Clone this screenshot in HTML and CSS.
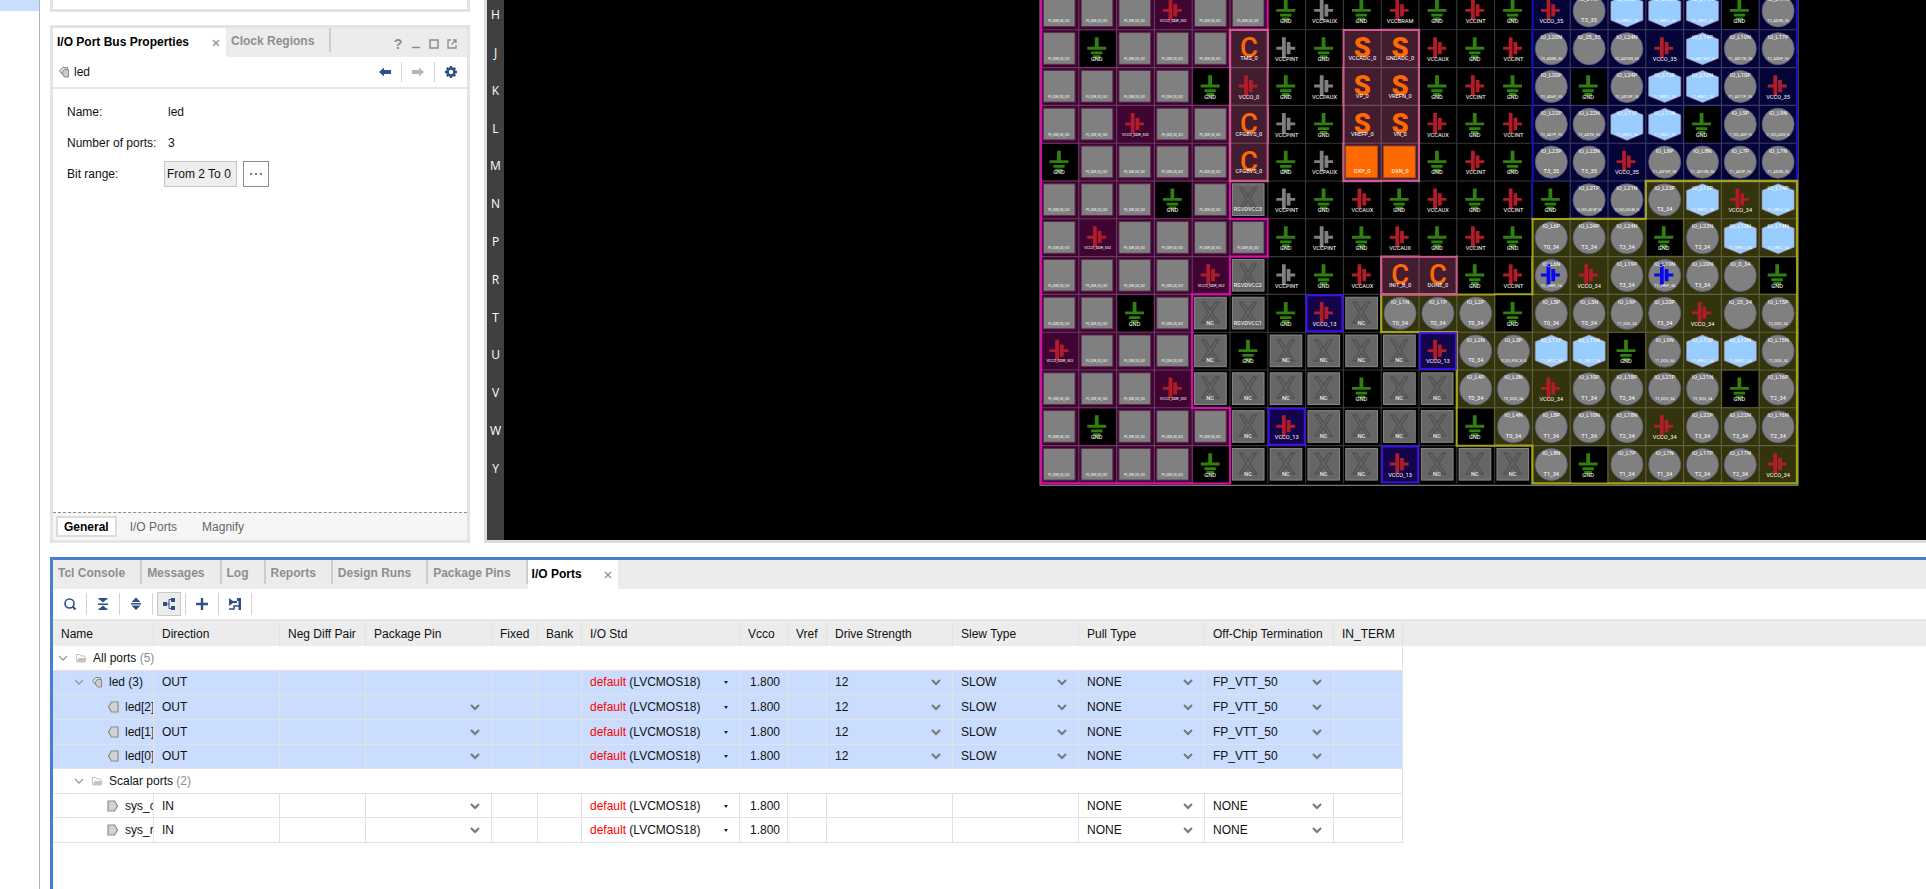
FILE: index.html
```html
<!DOCTYPE html>
<html lang="en">
<head>
  <meta charset="UTF-8">
  <meta name="viewport" content="width=device-width, initial-scale=1.0">
  <title>I/O Planning</title>
  <link rel="stylesheet" href="styles.css">
</head>
<body>
  <!-- shared icons -->
  <svg class="defs" width="0" height="0">
    <symbol id="bus" viewBox="0 0 12 12">
      <path d="M4.500 1.500h5v7h-5l-3-3.500z" fill="#ddd" stroke="#8a8a8a"/>
      <path d="M6.500 3.500h4v7.500h-4l-2-3v-2z" fill="#ccc" stroke="#8a8a8a"/>
    </symbol>
    <symbol id="outport" viewBox="0 0 12 12">
      <path d="M4.500 1h6.500v10h-6.500l-3-5z" fill="#d3d3d3" stroke="#8a8a8a" stroke-width="1.200"/>
    </symbol>
    <symbol id="inport" viewBox="0 0 12 12">
      <path d="M1 1h6.500l3 5-3 5h-6.500z" fill="#d3d3d3" stroke="#8a8a8a" stroke-width="1.200"/>
    </symbol>
    <symbol id="folder" viewBox="0 0 12 12">
      <path d="M1.500 9.500v-7h3.500l1 1.500h4v2" fill="none" stroke="#c4c4c4"/>
      <path d="M3.500 6h8l-1 4.500h-9z" fill="#c4c4c4"/>
    </symbol>
    <symbol id="twist" viewBox="0 0 12 12">
      <path d="M2 4l4 4 4-4" fill="none" stroke="#999" stroke-width="1.300"/>
    </symbol>
    <symbol id="close" viewBox="0 0 12 12">
      <path d="M3 3l6 6M9 3l-6 6" fill="none" stroke="#8c8c8c" stroke-width="1.200"/>
    </symbol>
  </svg>

  <aside class="sidebar"><div class="sidebar-item"></div></aside>

  <main class="main">
    <div class="upper">
      <div class="left">
        <div class="stub"></div>

        <section class="panel props">
          <div class="tabs">
            <div class="tab active props-tab">I/O Port Bus Properties
              <button class="close" aria-label="Close"><svg width="12" height="12"><use href="#close"/></svg></button>
            </div>
            <button class="tab">Clock Regions</button>
            <div class="winbtns">
              <button class="help">?</button>
              <button aria-label="Minimize"><svg width="12" height="12" viewBox="0 0 12 12"><path d="M2 9.500h8" stroke="#8c8c8c" stroke-width="1.500"/></svg></button>
              <button aria-label="Maximize"><svg width="12" height="12" viewBox="0 0 12 12"><path d="M2 2h8v8h-8z" fill="none" stroke="#8c8c8c" stroke-width="1.500"/></svg></button>
              <button aria-label="Float"><svg width="12" height="12" viewBox="0 0 12 12"><path d="M5 2h-3v8h8v-3M5.500 6.500l4-4M7 2h3v3" fill="none" stroke="#8c8c8c" stroke-width="1.300"/></svg></button>
            </div>
          </div>
          <div class="props-bar">
            <svg width="12" height="12"><use href="#bus"/></svg>
            <span class="props-name">led</span>
            <button aria-label="Back"><svg width="14" height="14" viewBox="0 0 14 14"><path d="M1 7l5-4.500v2.500h7v4h-7v2.500z" fill="#2f4f8c"/></svg></button>
            <i class="sep"></i>
            <button aria-label="Forward"><svg width="14" height="14" viewBox="0 0 14 14"><path d="M13 7l-5-4.500v2.500h-7v4h7v2.500z" fill="#b8b8b8"/></svg></button>
            <i class="sep"></i>
            <button aria-label="Settings"><svg width="14" height="14" viewBox="0 0 14 14"><circle cx="7" cy="7" r="3.500" fill="none" stroke="#2f4f8c" stroke-width="2.600"/><path d="M7 1v2M7 11v2M1 7h2M11 7h2M2.800 2.800l1.400 1.400M9.800 9.800l1.400 1.400M2.800 11.200l1.400-1.400M9.800 4.200l1.400-1.400" stroke="#2f4f8c" stroke-width="2.400"/></svg></button>
          </div>
          <div class="form">
            <span>Name:</span><span>led</span>
            <span>Number of ports:</span><span>3</span>
            <label for="range">Bit range:</label>
            <div class="range">
              <input id="range" type="text" value="From 2 To 0" readonly>
              <button aria-label="Edit range"><svg width="14" height="4" viewBox="0 0 14 4"><path d="M1 1h2v2h-2zM6 1h2v2h-2zM11 1h2v2h-2z" fill="#777"/></svg></button>
            </div>
          </div>
          <div class="subtabs">
            <button class="subtab on">General</button>
            <button class="subtab">I/O Ports</button>
            <button class="subtab">Magnify</button>
          </div>
        </section>
      </div>

      <section class="device">
        <div class="rows" id="rows"></div>
        <div class="package">
          <svg class="chip" id="chip" viewBox="0 0 800 520"></svg>
        </div>
      </section>
    </div>

    <section class="ports-panel">
      <div class="tabs">
        <button class="tab">Tcl Console</button>
        <button class="tab">Messages</button>
        <button class="tab">Log</button>
        <button class="tab">Reports</button>
        <button class="tab">Design Runs</button>
        <button class="tab">Package Pins</button>
        <div class="tab active">I/O Ports
          <button class="close" aria-label="Close"><svg width="12" height="12"><use href="#close"/></svg></button>
        </div>
      </div>
      <div class="toolbar">
        <button aria-label="Search"><svg width="14" height="14" viewBox="0 0 14 14"><circle cx="6.500" cy="6.500" r="4.500" fill="none" stroke="#2f4f8c" stroke-width="1.600"/><path d="M9.500 9.500l3 3" stroke="#2f4f8c" stroke-width="2"/></svg></button>
        <button aria-label="Collapse all"><svg width="14" height="14" viewBox="0 0 14 14"><path d="M2.500 1h9v1.500h-1l-3.500 3-3.500-3h-1zM2 6.500h10v1.500h-10zM2.500 13h9v-1.500h-1l-3.500-3-3.500 3h-1z" fill="#2f4f8c"/></svg></button>
        <button aria-label="Expand all"><svg width="14" height="14" viewBox="0 0 14 14"><path d="M7 0.500l4.500 4.500h-9zM2 6h10v1.500h-10zM2.500 8.500h9l-4.500 4.500z" fill="#2f4f8c"/></svg></button>
        <button class="on" aria-label="Group by interface"><svg width="14" height="14" viewBox="0 0 14 14"><path d="M1 5h4v4h-4zM9 1h4v4h-4zM9 9h4v4h-4z" fill="#2f4f8c"/><path d="M10 2.500h-3v9h3M5 7h2" fill="none" stroke="#2f4f8c"/></svg></button>
        <button aria-label="Add"><svg width="14" height="14" viewBox="0 0 14 14"><path d="M7 1v12M1 7h12" stroke="#2f4f8c" stroke-width="2.400"/></svg></button>
        <button aria-label="Place ports"><svg width="14" height="14" viewBox="0 0 14 14"><path d="M1 1l4 3h4v2h-4l-4 3zM9 1h4v12h-2.500v-9h-1.500z" fill="#2f4f8c"/><path d="M1 12h5v-3h5" fill="none" stroke="#2f4f8c" stroke-width="1.500"/></svg></button>
      </div>

      <table class="ports">
        <colgroup>
          <col class="w101"><col class="w126"><col class="w86"><col class="w126"><col class="w46"><col class="w44"><col class="w158">
          <col class="w48"><col class="w39"><col class="w126"><col class="w126"><col class="w126"><col class="w129"><col class="w69"><col>
        </colgroup>
        <thead>
          <tr>
            <th>Name</th><th>Direction</th><th>Neg Diff Pair</th><th>Package Pin</th><th>Fixed</th><th>Bank</th><th>I/O Std</th>
            <th>Vcco</th><th>Vref</th><th>Drive Strength</th><th>Slew Type</th><th>Pull Type</th><th>Off-Chip Termination</th><th>IN_TERM</th><th class="rest"></th>
          </tr>
        </thead>
        <tbody>
          <tr>
            <td colspan="14"><div class="node"><svg width="12" height="12"><use href="#twist"/></svg><svg width="12" height="12"><use href="#folder"/></svg><span>All ports <em>(5)</em></span></div></td>
            <td class="rest"></td>
          </tr>
          <tr class="sel">
            <td><div class="node l1"><svg width="12" height="12"><use href="#twist"/></svg><svg width="12" height="12"><use href="#bus"/></svg><span>led (3)</span></div></td>
            <td>OUT</td><td></td><td></td><td></td><td></td>
            <td><button class="std"><b>default</b> (LVCMOS18)</button></td>
            <td class="num">1.800</td><td></td>
            <td><select aria-label="Drive Strength"><option>12</option></select></td>
            <td><select aria-label="Slew Type"><option>SLOW</option></select></td>
            <td><select aria-label="Pull Type"><option>NONE</option></select></td>
            <td><select aria-label="Off-Chip Termination"><option>FP_VTT_50</option></select></td>
            <td></td><td class="rest"></td>
          </tr>
          <tr class="sel">
            <td><div class="node l2"><svg width="12" height="12"><use href="#outport"/></svg><span>led[2]</span></div></td>
            <td>OUT</td><td></td><td><select aria-label="Package Pin"><option></option></select></td><td></td><td></td>
            <td><button class="std"><b>default</b> (LVCMOS18)</button></td>
            <td class="num">1.800</td><td></td>
            <td><select aria-label="Drive Strength"><option>12</option></select></td>
            <td><select aria-label="Slew Type"><option>SLOW</option></select></td>
            <td><select aria-label="Pull Type"><option>NONE</option></select></td>
            <td><select aria-label="Off-Chip Termination"><option>FP_VTT_50</option></select></td>
            <td></td><td class="rest"></td>
          </tr>
          <tr class="sel">
            <td><div class="node l2"><svg width="12" height="12"><use href="#outport"/></svg><span>led[1]</span></div></td>
            <td>OUT</td><td></td><td><select aria-label="Package Pin"><option></option></select></td><td></td><td></td>
            <td><button class="std"><b>default</b> (LVCMOS18)</button></td>
            <td class="num">1.800</td><td></td>
            <td><select aria-label="Drive Strength"><option>12</option></select></td>
            <td><select aria-label="Slew Type"><option>SLOW</option></select></td>
            <td><select aria-label="Pull Type"><option>NONE</option></select></td>
            <td><select aria-label="Off-Chip Termination"><option>FP_VTT_50</option></select></td>
            <td></td><td class="rest"></td>
          </tr>
          <tr class="sel">
            <td><div class="node l2"><svg width="12" height="12"><use href="#outport"/></svg><span>led[0]</span></div></td>
            <td>OUT</td><td></td><td><select aria-label="Package Pin"><option></option></select></td><td></td><td></td>
            <td><button class="std"><b>default</b> (LVCMOS18)</button></td>
            <td class="num">1.800</td><td></td>
            <td><select aria-label="Drive Strength"><option>12</option></select></td>
            <td><select aria-label="Slew Type"><option>SLOW</option></select></td>
            <td><select aria-label="Pull Type"><option>NONE</option></select></td>
            <td><select aria-label="Off-Chip Termination"><option>FP_VTT_50</option></select></td>
            <td></td><td class="rest"></td>
          </tr>
          <tr>
            <td colspan="14"><div class="node l1"><svg width="12" height="12"><use href="#twist"/></svg><svg width="12" height="12"><use href="#folder"/></svg><span>Scalar ports <em>(2)</em></span></div></td>
            <td class="rest"></td>
          </tr>
          <tr>
            <td><div class="node l2"><svg width="12" height="12"><use href="#inport"/></svg><span>sys_clk</span></div></td>
            <td>IN</td><td></td><td><select aria-label="Package Pin"><option></option></select></td><td></td><td></td>
            <td><button class="std"><b>default</b> (LVCMOS18)</button></td>
            <td class="num">1.800</td><td></td><td></td><td></td>
            <td><select aria-label="Pull Type"><option>NONE</option></select></td>
            <td><select aria-label="Off-Chip Termination"><option>NONE</option></select></td>
            <td></td><td class="rest"></td>
          </tr>
          <tr>
            <td><div class="node l2"><svg width="12" height="12"><use href="#inport"/></svg><span>sys_rst</span></div></td>
            <td>IN</td><td></td><td><select aria-label="Package Pin"><option></option></select></td><td></td><td></td>
            <td><button class="std"><b>default</b> (LVCMOS18)</button></td>
            <td class="num">1.800</td><td></td><td></td><td></td>
            <td><select aria-label="Pull Type"><option>NONE</option></select></td>
            <td><select aria-label="Off-Chip Termination"><option>NONE</option></select></td>
            <td></td><td class="rest"></td>
          </tr>
        </tbody>
      </table>
    </section>
  </main>
  <script src="script.js"></script>
</body>
</html>
```

FILE: styles.css
```css
*{
  box-sizing:border-box;
}
body{
  margin:0;
  height:100vh;
  display:flex;
  overflow:hidden;
  background-color:#fff;
  color:#111;
  font-family:"Liberation Sans", Arial, sans-serif;
  font-size:12px;
}
button, input, select{
  font:inherit;
  color:inherit;
}
button{
  border:0;
  padding:0;
  background:none;
}
svg{
  display:block;
  flex:none;
}
.defs{
  position:absolute;
}

/* left strip */
.sidebar{
  flex:none;
  width:40px;
  border-right:1px solid #b4b4b4;
}
.sidebar-item{
  height:11px;
  background-color:#cbddfe;
}

.main{
  flex:1;
  min-width:0;
  display:flex;
  flex-direction:column;
  gap:14px;
  padding-left:10px;
}
.upper{
  flex:1;
  min-height:0;
  display:flex;
  gap:14px;
}
.left{
  flex:none;
  width:420px;
  display:flex;
  flex-direction:column;
  gap:13px;
}
.stub{
  height:12px;
  border:3px solid #e4e4e4;
  border-top:0;
}
.panel{
  border:3px solid #e4e4e4;
}

/* tabs */
.tabs{
  display:flex;
  height:29px;
  background-color:#ececec;
}
.tab{
  height:24px;
  padding:2px 15px 0 5px;
  border-right:2px solid #ccc;
  display:flex;
  align-items:center;
  color:#8e8e8e;
  font-weight:bold;
  white-space:nowrap;
}
.tab.active{
  height:29px;
  padding:0 4px 2px 4px;
  border-right:0;
  gap:20px;
  background-color:#fff;
  color:#000;
}
.close{
  padding-top:3px;
}
.props-tab{
  width:173px;
  justify-content:space-between;
}
.winbtns{
  margin-left:auto;
  padding:2px 9px 0 0;
  display:flex;
  align-items:center;
  gap:6px;
}
.help{
  width:12px;
  color:#8c8c8c;
  font-size:14px;
  font-weight:bold;
}

/* properties */
.props{
  flex:1;
  display:flex;
  flex-direction:column;
}
.props-bar{
  height:32px;
  padding:0 9px 0 5px;
  border-bottom:2px solid #e6e6e6;
  display:flex;
  align-items:center;
  gap:9px;
}
.props-name{
  flex:1;
  margin-left:-5px;
}
.sep{
  width:1px;
  height:20px;
  background-color:#d8d8d8;
}
.form{
  flex:1;
  padding:7px 14px;
  display:grid;
  grid-template-columns:101px 1fr;
  grid-auto-rows:31px;
  align-content:start;
  align-items:center;
}
.range{
  display:flex;
  gap:6px;
  margin-left:-4px;
}
.range input{
  width:73px;
  height:26px;
  padding:0 2px;
  border:1px solid #c4c4c4;
  background-color:#eee;
}
.range button{
  width:26px;
  height:26px;
  border:1px solid #8c8c8c;
  display:flex;
  align-items:center;
  justify-content:center;
}
.subtabs{
  display:flex;
  gap:1px;
  padding:3px;
  border-top:1px dashed #8c8c8c;
  background-color:#f6f6f6;
}
.subtab{
  height:21px;
  padding:0 12px;
  color:#666;
}
.subtab.on{
  padding:0 6px;
  border:2px solid #dcdcdc;
  background-color:#fff;
  color:#000;
  font-weight:bold;
}

/* package view */
.device{
  flex:1;
  min-width:0;
  display:flex;
  overflow:hidden;
  border-left:3px solid #ddd;
  border-bottom:3px solid #ddd;
  background-color:#000;
}
.rows{
  flex:none;
  width:17px;
  padding-bottom:53px;
  display:flex;
  flex-direction:column;
  justify-content:flex-end;
  background-color:#404040;
  color:#fff;
  font-family:"Open Sans", sans-serif;
  font-size:12px;
  text-align:center;
}
.rows span{
  flex:0 0 calc(491px / 13);
  display:flex;
  align-items:center;
  justify-content:center;
}
.package{
  flex:1;
  min-width:0;
  display:flex;
  align-items:flex-end;
  justify-content:flex-end;
  padding:0 129px 57px 0;
}
.chip{
  width:756px;
  overflow:visible;
  font-family:Roboto, sans-serif;
  text-anchor:middle;
}
.t6{ font-size:6px; }
.t4{ font-size:4px; }
.t3{ font-size:3px; }
.lbl{
  fill:#fff;
}
.big{
  font-size:29px;
  font-weight:500;
  fill:#ff6a00;
}
.big.s{
  font-weight:900;
}
.nc{
  font-size:32px;
  fill:none;
  stroke:#4c4c4c;
}

/* i/o ports */
.ports-panel{
  flex:none;
  padding-bottom:46px;
  border-top:3px solid #4a7fd0;
  border-left:3px solid #4a7fd0;
}
.toolbar{
  height:32px;
  border-bottom:2px solid #e6e6e6;
  padding:0 0 1px 1px;
  display:flex;
  align-items:center;
}
.toolbar button{
  width:33px;
  height:22px;
  border-right:1px solid #d4d4d4;
  display:flex;
  align-items:center;
  justify-content:center;
}
.toolbar .on svg{
  box-sizing:content-box;
  padding:4px;
  border:1px solid #c8c8c8;
  background-color:#ececec;
}
.ports{
  width:100%;
  height:222px;
  table-layout:fixed;
  border-collapse:separate;
  border-spacing:0;
}
.w39{ width:39px; }
.w44{ width:44px; }
.w46{ width:46px; }
.w48{ width:48px; }
.w69{ width:69px; }
.w86{ width:86px; }
.w101{ width:101px; }
.w126{ width:126px; }
.w129{ width:129px; }
.w158{ width:158px; }
.ports th, .ports td{
  padding:0 0 0 8px;
  border-right:1px solid #e2e2e2;
  border-bottom:1px solid #e2e2e2;
  overflow:hidden;
  text-align:left;
  white-space:nowrap;
}
.ports th{
  height:25px;
  border-bottom:0;
  background-color:#ececec;
  font-weight:normal;
}
.ports td:first-child{
  padding-left:4px;
}
.ports .rest{
  border:0;
}
.ports .num{
  padding-left:10px;
}
.sel td:not(.rest){
  background-color:#cbddfe;
}
.node{
  height:20px;
  display:flex;
  align-items:center;
  gap:6px;
}
.node em{
  font-style:normal;
  color:#8c8c8c;
}
.l1{ padding-left:16px; }
.l2{ padding-left:50px; }
.std, .ports select{
  display:block;
  width:100%;
  height:20px;
  padding:0;
  border:0;
  appearance:none;
  text-align:left;
  background:url("data:image/svg+xml,%3Csvg xmlns='http://www.w3.org/2000/svg' width='12' height='12'%3E%3Cpath d='M2 4l4 4 4-4' fill='none' stroke='%23777' stroke-width='2'/%3E%3C/svg%3E") no-repeat right 10px center;
}
.std{
  background-image:url("data:image/svg+xml,%3Csvg xmlns='http://www.w3.org/2000/svg' width='12' height='12'%3E%3Cpath d='M4 5h4l-2 3z' fill='%23222'/%3E%3C/svg%3E");
  background-position:right 7px center;
}
.std b{
  color:#f00;
  font-weight:normal;
}
```

FILE: script.js
```js
// s: ddr pad, M: ddr supply, g: gnd, w: ps supply, V: core supply, C/S/O: config pads,
// X: not connected, b: bank 13 supply, c: pad, h: clock pad, v: bank supply, B: vref pad
const left = {
  H: "s s s M s s g w,VCCPAUX g V,VCCBRAM g V,VCCINT g",
  J: "s g s s s C,TMS_0 w,VCCPINT g S,VCCADC_0 S,GNDADC_0 V,VCCAUX g V,VCCINT",
  K: "s s s s g k,VCCO_0 g w,VCCPAUX S,VP_0 S,VREFN_0 g V,VCCINT g",
  L: "s s M s s C,CFGBVS_0 w,VCCPINT g S,VREFP_0 S,VN_0 V,VCCAUX g V,VCCINT",
  M: "g s s s s C,CFGBVS_0 g w,VCCPAUX O,DXP_0 O,DXN_0 g V,VCCINT g",
  N: "s s s g s X,RSVDVCC3 w,VCCPINT g V,VCCAUX g V,VCCAUX g V,VCCINT",
  P: "s M s s s s g w,VCCPINT g V,VCCAUX g V,VCCINT g",
  R: "s s s s M X,RSVDVCC2 w,VCCPINT g V,VCCAUX C,INIT_B_0 C,DONE_0 g V,VCCINT",
  T: "s s g s X X,RSVDVCC1 g b X c,IO_L1N,T0_34 c,IO_L1P,T0_34 c,IO_L2P,T0_34 g",
  U: "M s s s X g X X X X b c,IO_L2N,T0_34 c,IO_L3P,T0_DQS_PUDC_B_34",
  V: "s s s M X X X X g X X c,IO_L4P,T0_34 c,IO_L3N,T0_DQS_34",
  W: "s g s s s X b X X X X g c,IO_L4N,T0_34",
  Y: "s s s s g X X X X b X X X"
};
const right = {
  H: "v,VCCO_35 c,IO_L19P,T3_35 h,IO_L13P,T2_MRCC_35 h,IO_L13N,T2_MRCC_35 h,IO_L14N,T2_SRCC_35 g c,IO_L17N,T2_AD5N_35",
  J: "c,IO_L20N,T3_AD6N_35 c,IO_25_35 c,IO_L24N,T3_AD15N_35 v,VCCO_35 h,IO_L14P,T2_AD4P_SRCC_35 c,IO_L10N,T1_AD11N_35 c,IO_L17P,T2_AD5P_35",
  K: "c,IO_L20P,T3_AD6P_35 g c,IO_L24P,T3_AD15P_35 h,IO_L12P,T1_MRCC_35 h,IO_L12N,T1_MRCC_35 c,IO_L10P,T1_AD11P_35 v,VCCO_35",
  L: "c,IO_L22P,T3_AD7P_35 c,IO_L22N,T3_AD7N_35 h,IO_L11P,T1_SRCC_35 h,IO_L11N,T1_SRCC_35 g c,IO_L9P,T1_DQS_AD3P_35 c,IO_L9N,T1_DQS_AD3N_35",
  M: "c,IO_L23P,T3_35 c,IO_L23N,T3_35 v,VCCO_35 c,IO_L8P,T1_AD10P_35 c,IO_L8N,T1_AD10N_35 c,IO_L7P,T1_AD2P_35 c,IO_L7N,T1_AD2N_35",
  N: "g c,IO_L21P,T3_DQS_AD14P_35 c,IO_L21N,T3_DQS_AD14N_35 c,IO_L23P,T3_34 h,IO_L13P,T2_MRCC_34 v,VCCO_34 h,IO_L14P,T2_SRCC_34",
  P: "c,IO_L6P,T0_34 c,IO_L24P,T3_34 c,IO_L24N,T3_34 g c,IO_L23N,T3_34 h,IO_L13N,T2_MRCC_34 h,IO_L14N,T2_SRCC_34",
  R: "B,IO_L6N,T0_VREF_34 v,VCCO_34 c,IO_L19P,T3_34 B,IO_L19N,T3_VREF_34 c,IO_L20N,T3_34 c,IO_0_34 g",
  T: "c,IO_L5P,T0_34 c,IO_L5N,T0_34 c,IO_L9P,T1_DQS_34 c,IO_L20P,T3_34 v,VCCO_34 c,IO_25_34 c,IO_L15P,T2_DQS_34",
  U: "h,IO_L11P,T1_SRCC_34 h,IO_L11N,T1_SRCC_34 g c,IO_L9N,T1_DQS_34 h,IO_L12P,T1_MRCC_34 h,IO_L12N,T1_MRCC_34 c,IO_L15N,T2_DQS_34",
  V: "v,VCCO_34 c,IO_L10P,T1_34 c,IO_L18P,T2_34 c,IO_L21P,T3_DQS_34 c,IO_L21N,T3_DQS_34 g c,IO_L16P,T2_34",
  W: "c,IO_L8P,T1_34 c,IO_L10N,T1_34 c,IO_L18N,T2_34 v,VCCO_34 c,IO_L22P,T3_34 c,IO_L22N,T3_34 c,IO_L16N,T2_34",
  Y: "c,IO_L8N,T1_34 g c,IO_L7P,T1_34 c,IO_L7N,T1_34 c,IO_L17P,T2_34 c,IO_L17N,T2_34 v,VCCO_34"
};

// bank outlines, in cells
const banks = [
  {fill: "#400433", stroke: "#d60fa8", at: "0,0 6,0 6,1 5,1 5,6 6,6 6,7 5,7 5,8 4,8 4,11 5,11 5,13 0,13"},
  {fill: "#040438", stroke: "#1414b4", at: "13,0 20,0 20,5 16,5 16,6 13,6"},
  {fill: "#33330c", stroke: "#a3a31c", at: "16,5 20,5 20,13 13,13 13,12 11,12 11,9 9,9 9,8 13,8 13,6 16,6"},
  {fill: "#441c30", stroke: "#cc5c90", at: "5,1 6,1 6,5 5,5"},
  {fill: "#441c30", stroke: "#cc5c90", at: "8,1 10,1 10,5 8,5"},
  {fill: "#441c30", stroke: "#cc5c90", at: "9,7 11,7 11,8 9,8"}
];

const label = (text, y, x = 20) => {
  const size = text.length > 12 ? 3 : text.length > 8 ? 4 : 6;
  return `<text class="lbl t${size}" x="${x}" y="${y}">${text}</text>`;
}
const battery = (color) => `<path fill="${color}" d="M15 8h4v22h-4v-9h-6v-3h6zM20 13h4v5h5v3h-5v5h-4z"/>`;
const square = (fill, stroke) => `<rect x="2.500" y="3" width="33.500" height="33.500" fill="${fill}" stroke="${stroke}"/>`;
const circle = '<circle cx="20" cy="20" r="17" fill="#808080" stroke="#5c5c8c" stroke-width=".8"/>';

const drawPad = (pad) => {
  const [kind, top, bottom] = pad.split(",");
  switch(kind){
    case "s": return square("#808080", "#5c2c50") + label("PS_DDR_DQ_502", 32, 19);
    case "M": return battery("#b01c28") + label("VCCO_DDR_502", 32);
    case "g": return '<rect x="1" y="1" width="38" height="38"/><path fill="#308010" d="M17 8h4v10h8v3h-20v-3h8zM13 23h12v3h-12zM15 27h8v3h-8z"/>' + label("GND", 33, 19);
    case "w": return battery("#808080") + label(top, 33);
    case "k":
    case "v":
    case "V": return battery("#b01c28") + label(top, 33);
    case "C": return '<text class="big" x="20" y="29">C</text>' + label(top, 32);
    case "S": return '<text class="big s" x="20" y="29">S</text>' + label(top, 32);
    case "O": return square("#ff6a00", "#b04c18") + label(top, 32);
    case "X": return square("#666", "#8c8c8c") + '<text class="nc" x="19" y="30">X</text>' + label(top || "NC", 32, 19);
    case "b": return '<rect x="1" y="1" width="38" height="38" fill="#14044c" stroke="#3c10f0" stroke-width="2"/>' + battery("#b01c28") + label("VCCO_13", 33);
    case "h": return '<path d="M20 3l17 7v20l-17 7-17-7v-20z" fill="#99ccff" stroke="#b08090" stroke-width=".6"/>' + label(top, 10) + label(bottom, 32);
    case "B": return circle + battery("#0808f0") + label(top, 10) + label(bottom, 32);
    case "c": return circle + label(top, 10) + (bottom ? label(bottom, 32) : "");
  }
}

const polygon = (bank, attrs) => {
  const points = bank.at.replace(/\d+/g, n => n * 40);
  return `<polygon points="${points}" ${attrs}/>`;
}

let out = '<rect x="-1" y="-1" width="802" height="523" fill="#000" stroke="#a0a0a0"/>';
banks.forEach(bank => out += polygon(bank, `fill="${bank.fill}"`));

let lines = "";
for(let i = 1; i < 20; i++) lines += `M${i * 40} 0v520`;
for(let i = 1; i < 13; i++) lines += `M0 ${i * 40}h800`;
out += `<path d="${lines}" stroke="#fff" stroke-opacity=".22" stroke-width="1.200"/>`;

banks.forEach(bank => out += polygon(bank, `fill="none" stroke="${bank.stroke}" stroke-width="2.400"`));

Object.keys(left).forEach((name, row) => {
  document.getElementById("rows").innerHTML += `<span>${name}</span>`;
  (left[name] + " " + right[name]).split(" ").forEach((pad, col) => {
    out += `<g transform="translate(${col * 40} ${row * 40})">${drawPad(pad)}</g>`;
  })
})

document.getElementById("chip").innerHTML = out;
```
